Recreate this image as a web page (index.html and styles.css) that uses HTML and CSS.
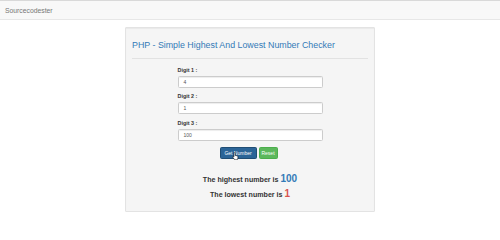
FILE: index.html
```html
<!DOCTYPE html>
<html>
<head>
<meta charset="utf-8">
<link rel="stylesheet" href="styles.css">
</head>
<body>
<nav class="navbar"><span class="brand">Sourcecodester</span></nav>
<div class="well">
  <h3 class="title">PHP - Simple Highest And Lowest Number Checker</h3>
  <hr class="rule">
  <form class="form">
    <div class="group">
      <label class="label">Digit 1 :</label>
      <div class="input">4</div>
    </div>
    <div class="group">
      <label class="label">Digit 2 :</label>
      <div class="input">1</div>
    </div>
    <div class="group">
      <label class="label">Digit 3 :</label>
      <div class="input">100</div>
    </div>
    <div class="buttons">
      <span class="btn btn-primary">Get Number
        <svg class="cursor" width="7" height="8" viewBox="0 0 14 16"><path d="M4 1.5c0-.8.6-1.3 1.2-1.3S6.5.7 6.5 1.5V7l.4-.1c.7-.2 1.4.1 1.6.7.6-.3 1.4 0 1.6.6.6-.3 1.4.1 1.6.8.2 1 .3 2.6-.2 4.2L10.7 15.5H5.3L2.2 11.2c-.6-.8-1.2-1.7-.6-2.3.6-.6 1.5-.2 2.4.8V1.5z" fill="#fff" stroke="#000" stroke-width="1.1"/></svg>
      </span>
      <span class="btn btn-success">Reset</span>
    </div>
  </form>
  <div class="results">
    <p class="line">The highest number is <span class="num high">100</span></p>
    <p class="line">The lowest number is <span class="num low">1</span></p>
  </div>
</div>
</body>
</html>
```
FILE: styles.css
```css
html, body {
  margin: 0;
  padding: 0;
  background: #fff;
  font-family: "Liberation Sans", Arial, sans-serif;
}
.navbar {
  height: 18px;
  background: #f8f8f8;
  border-top: 1px solid #d9d9d9;
  border-bottom: 1px solid #e7e7e7;
  display: flex;
  align-items: center;
  padding-left: 5px;
}
.brand {
  font-size: 6.8px;
  color: #777;
}
.well {
  width: 236px;
  margin: 7px auto 0;
  height: 171px;
  padding: 12px 6px 0;
  background: #f5f5f5;
  border: 1px solid #e3e3e3;
  border-radius: 1px;
  box-shadow: inset 0 1px 1px rgba(0,0,0,0.05);
}
.title {
  margin: 0;
  font-size: 8.85px;
  line-height: 11px;
  font-weight: normal;
  color: #337ab7;
}
.rule {
  margin: 7px 0 0;
  border: 0;
  border-top: 1px solid #e2e2e2;
  height: 0;
}
.form {
  width: 145px;
  margin: 7.5px auto 0;
}
.group {
  display: flex;
  flex-direction: column;
  margin-bottom: 5.8px;
}
.label {
  font-size: 5.4px;
  line-height: 7px;
  font-weight: bold;
  color: #333;
  margin-bottom: 2px;
}
.input {
  height: 10px;
  border: 1px solid #ccc;
  border-radius: 1.5px;
  background: #fff;
  font-size: 5px;
  line-height: 10px;
  color: #555;
  padding-left: 5px;
  box-shadow: inset 0 1px 1px rgba(0,0,0,0.075);
}
.buttons {
  display: flex;
  justify-content: center;
  gap: 2px;
  margin-top: 0.5px;
  padding-right: 3px;
}
.btn {
  position: relative;
  display: flex;
  align-items: center;
  justify-content: center;
  height: 12px;
  border-radius: 1.5px;
  font-size: 5px;
  color: #fff;
  box-sizing: border-box;
}
.btn-primary {
  width: 37px;
  background: #2b6497;
  border: 1px solid #204d74;
}
.btn-success {
  width: 19px;
  background: #5cb85c;
  border: 1px solid #4cae4c;
}
.cursor {
  position: absolute;
  left: 11px;
  top: 4px;
}
.results {
  margin-top: 14.5px;
  display: flex;
  flex-direction: column;
  align-items: center;
}
.line {
  margin: 0;
  font-size: 7.1px;
  line-height: 14.7px;
  font-weight: bold;
  color: #333;
}
.num {
  font-size: 10px;
  line-height: 0;
}
.high { color: #337ab7; }
.low { color: #d9534f; }
```
